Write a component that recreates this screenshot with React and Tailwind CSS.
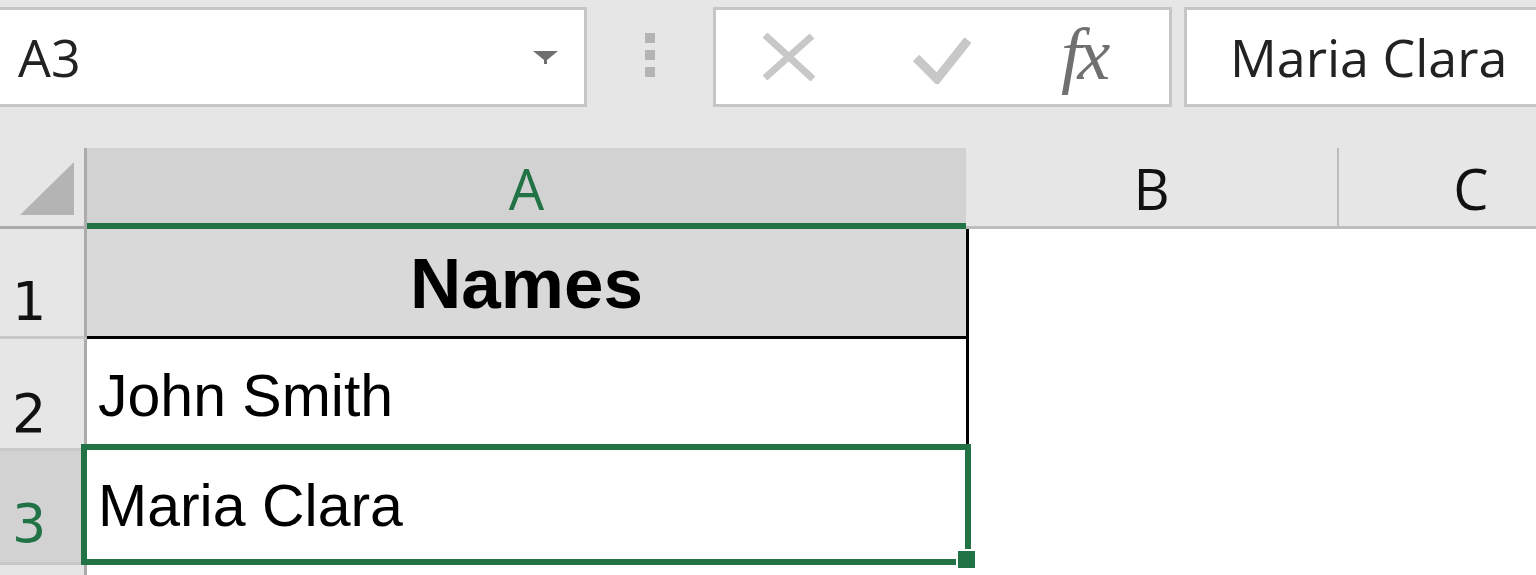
import React from 'react'

const GREEN = '#217346'

function RowHeader({ n, h, pt, active }) {
  const tone = active ? 'bg-[#d2d2d2] text-[#217346]' : 'bg-[#e6e6e6] text-[#111]'
  return (
    <div
      className={`w-[87px] shrink-0 border-r-[3px] border-b-[3px] border-[#ababab] border-b-[#c8c8c8] pl-[12px] text-[54px] leading-none ${tone}`}
      style={{ height: h, paddingTop: pt }}
    >
      <span className="font-['DejaVu_Sans',sans-serif]">{n}</span>
    </div>
  )
}

export default function App() {
  return (
    <div className="relative w-[1536px] h-[575px] overflow-hidden bg-[#e6e6e6] font-['Open_Sans',sans-serif]">
      {/* ── Formula bar ─────────────────────────────── */}
      <div className="flex items-start h-[148px] pt-[7px]">
        <div className="-ml-[3px] w-[590px] h-[100px] shrink-0 border-[3px] border-[#c6c6c6] bg-white flex items-center justify-between pl-[18px] pr-[26px]">
          <span className="text-[52px] leading-none text-[#222]">A3</span>
          <svg className="mt-[2px]" width="25" height="14" viewBox="0 0 25 14">
            <polygon points="0,0 25,0 14,9 14,13 11,13 11,9" fill="#6f6f6f" />
          </svg>
        </div>

        <div className="w-[126px] shrink-0 flex flex-col items-center gap-[7px] pt-[26px]">
          <div className="w-[10px] h-[10px] bg-[#b4b4b4]" />
          <div className="w-[10px] h-[10px] bg-[#b4b4b4]" />
          <div className="w-[10px] h-[10px] bg-[#b4b4b4]" />
        </div>

        <div className="w-[459px] h-[100px] shrink-0 border-[3px] border-[#c6c6c6] bg-white flex items-center">
          <svg className="ml-[47px]" width="52" height="48" viewBox="0 0 52 48">
            <path d="M2 2 L50 46 M49 3 L2 45" stroke="#c8c8c8" strokeWidth="7" fill="none" />
          </svg>
          <svg className="ml-[98px] mt-[6px]" width="58" height="48" viewBox="0 0 58 48">
            <path d="M3 22 L24 43 L55 4" stroke="#c8c8c8" strokeWidth="9" fill="none" />
          </svg>
          <span className="ml-[90px] font-['Liberation_Serif',serif] italic text-[74px] leading-none text-[#707070] tracking-[-4px] -mt-[6px]">
            fx
          </span>
        </div>

        <div className="ml-[12px] w-[400px] h-[100px] shrink-0 border-[3px] border-r-0 border-[#c6c6c6] bg-white flex items-center pl-[43px]">
          <span className="text-[52px] leading-none text-[#222] whitespace-nowrap">Maria Clara</span>
        </div>
      </div>

      {/* ── Column headers ──────────────────────────── */}
      <div className="flex h-[81px]">
        <div className="w-[87px] shrink-0 border-r-[3px] border-b-[3px] border-[#ababab] relative">
          <svg className="absolute left-[20px] top-[14px]" width="54" height="53" viewBox="0 0 54 53">
            <polygon points="54,0 54,53 0,53" fill="#b4b4b4" />
          </svg>
        </div>
        <div className="w-[879px] shrink-0 bg-[#d2d2d2] border-b-[6px] border-[#217346] text-center text-[56px] leading-none pt-[12px] text-[#217346]">
          A
        </div>
        <div className="w-[373px] shrink-0 border-r-[2px] border-b-[3px] border-[#bdbdbd] text-center text-[56px] leading-none pt-[12px] text-[#111]">
          B
        </div>
        <div className="w-[264px] shrink-0 border-b-[3px] border-[#bdbdbd] text-center text-[56px] leading-none pt-[12px] text-[#111]">
          C
        </div>
      </div>

      {/* ── Rows ────────────────────────────────────── */}
      <div className="flex h-[110px]">
        <RowHeader n="1" h={110} pt={43} />
        <div className="w-[882px] shrink-0 bg-[#d9d9d9] border-r-[3px] border-b-[3px] border-black text-center font-['Liberation_Sans',sans-serif] font-bold text-[71px] leading-none pt-[19px] text-black">
          Names
        </div>
        <div className="flex-1 bg-white" />
      </div>

      <div className="flex h-[112px]">
        <RowHeader n="2" h={112} pt={45} />
        <div className="w-[882px] shrink-0 bg-white border-r-[3px] border-black pl-[11px] font-['Liberation_Sans',sans-serif] text-[59px] leading-none pt-[28px] text-black">
          John Smith
        </div>
        <div className="flex-1 bg-white" />
      </div>

      <div className="flex h-[114px]">
        <RowHeader n="3" h={114} pt={43} active />
        <div className="w-[882px] shrink-0 bg-white pl-[11px] font-['Liberation_Sans',sans-serif] text-[59px] leading-none pt-[26px] text-black">
          Maria Clara
        </div>
        <div className="flex-1 bg-white" />
      </div>

      <div className="flex h-[20px]">
        <div className="w-[87px] shrink-0 border-r-[3px] border-[#ababab] bg-[#e6e6e6]" />
        <div className="flex-1 bg-white" />
      </div>

      {/* ── Selection ───────────────────────────────── */}
      <div
        className="absolute left-[81px] top-[444px] w-[890px] h-[121px] border-[6px]"
        style={{ borderColor: GREEN }}
      />
      <div className="absolute left-[956px] top-[549px] w-[21px] h-[21px] bg-[#217346] border-2 border-white" />
    </div>
  )
}
